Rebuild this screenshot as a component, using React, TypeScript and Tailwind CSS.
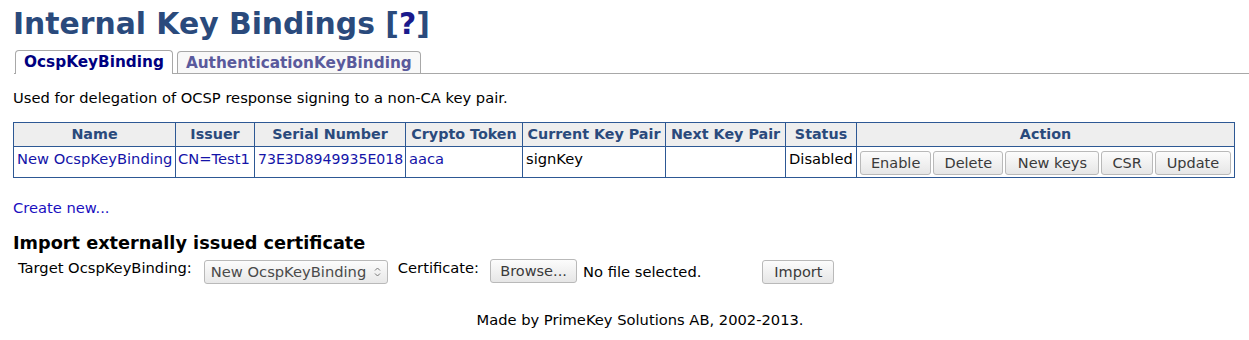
import React from 'react';

const Btn: React.FC<{ label: string; className?: string }> = ({ label, className = '' }) => (
  <button
    className={`h-[24px] px-[8px] rounded-[3px] border border-[#b9b9b9] bg-gradient-to-b from-[#fcfcfc] to-[#e6e6e6] text-[14.5px] text-[#3a3a3a] leading-none whitespace-nowrap ${className}`}
  >
    {label}
  </button>
);

const headers: [string, string][] = [
  ['Name', 'w-[162px]'],
  ['Issuer', 'w-[79px]'],
  ['Serial Number', 'w-[151px]'],
  ['Crypto Token', 'w-[117px]'],
  ['Current Key Pair', 'w-[143px]'],
  ['Next Key Pair', 'w-[120px]'],
  ['Status', 'w-[71px]'],
  ['Action', ''],
];

export default function App() {
  return (
    <div className="min-h-[340px] bg-white text-[14.7px] text-black" style={{ fontFamily: '"DejaVu Sans", Verdana, sans-serif' }}>
      <div className="pl-[13px] pt-[6px]">
        <h1 className="text-[29.8px] font-bold leading-[36px] text-[#2a4a7c]">
          Internal Key Bindings [<a className="text-[#1a1a8c]">?</a>]
        </h1>
      </div>

      {/* tabs */}
      <div className="mt-[8px] ml-[14px] flex items-end gap-[4px] border-b border-[#a8a8a8] pl-[1px] h-[24px]">
        <div className="px-[8px] border border-b-0 border-[#a8a8a8] rounded-t-[4px] bg-white text-[15.3px] font-bold text-[#000080] leading-[23px] relative top-[1px] h-[24px]">
          OcspKeyBinding
        </div>
        <div className="h-[22px] px-[8px] border border-b-0 border-[#a8a8a8] rounded-t-[4px] bg-[#f8f8f8] text-[15.3px] font-bold text-[#5a5a9c] leading-[22px]">
          AuthenticationKeyBinding
        </div>
      </div>

      <div className="px-[13px]">
        <p className="mt-[15px] leading-[18px]">Used for delegation of OCSP response signing to a non-CA key pair.</p>

        <table className="mt-[15px] w-[1222px] table-fixed border-collapse border border-[#2d5894]">
          <thead>
            <tr className="bg-[#eeeeee]">
              {headers.map(([h, w]) => (
                <th key={h} className={`${w} h-[24px] border border-[#2d5894] px-0 text-[14.3px] font-bold text-[#2a4a7c] text-center whitespace-nowrap`}>
                  {h}
                </th>
              ))}
            </tr>
          </thead>
          <tbody>
            <tr className="align-top leading-[18px]">
              <td className="border border-[#2d5894] px-[3px] pt-[3px] text-[#1414a8] whitespace-nowrap">New OcspKeyBinding</td>
              <td className="border border-[#2d5894] px-[2px] pt-[3px] text-[#1414a8] whitespace-nowrap">CN=Test1</td>
              <td className="border border-[#2d5894] px-[3px] pt-[3px] text-[14.1px] text-[#1414a8] whitespace-nowrap">73E3D8949935E018</td>
              <td className="border border-[#2d5894] px-[3px] pt-[3px] text-[#1414a8]">aaca</td>
              <td className="border border-[#2d5894] px-[3px] pt-[3px]">signKey</td>
              <td className="border border-[#2d5894] px-[3px] pt-[3px]"></td>
              <td className="border border-[#2d5894] px-[3px] pt-[3px] whitespace-nowrap">Disabled</td>
              <td className="border border-[#2d5894] px-[3px] pt-[4px] pb-[2px]">
                <div className="flex gap-[2px]">
                  <Btn label="Enable" className="w-[72px]" />
                  <Btn label="Delete" className="w-[71px]" />
                  <Btn label="New keys" className="w-[95px]" />
                  <Btn label="CSR" className="w-[52px]" />
                  <Btn label="Update" className="w-[77px]" />
                </div>
              </td>
            </tr>
          </tbody>
        </table>

        <a className="block mt-[21px] text-[#1a0fbf] leading-[18px]">Create new...</a>

        <h2 className="mt-[16px] text-[17.7px] font-bold leading-[21px]">Import externally issued certificate</h2>

        <div className="mt-[4px] flex items-start pl-[5px]">
          <span className="mt-[1px] leading-[18px]">Target OcspKeyBinding:</span>
          <div className="ml-[12px] mt-[2px] h-[24px] w-[184px] flex items-center justify-between pl-[6px] pr-[6px] rounded-[3px] border border-[#b9b9b9] bg-gradient-to-b from-[#fcfcfc] to-[#e8e8e8] text-[#4a4a4a] whitespace-nowrap">
            <span>New OcspKeyBinding</span>
            <svg width="7" height="12" viewBox="0 0 7 12">
              <path d="M1 4.5 L3.5 2 L6 4.5" fill="none" stroke="#777" strokeWidth="1" />
              <path d="M1 7.5 L3.5 10 L6 7.5" fill="none" stroke="#777" strokeWidth="1" />
            </svg>
          </div>
          <span className="ml-[10px] mt-[1px] leading-[18px]">Certificate:</span>
          <Btn label="Browse..." className="ml-[11px] mt-[1px] w-[87px] h-[23px]" />
          <span className="ml-[6px] mt-[5px] leading-[18px] whitespace-nowrap">No file selected.</span>
          <Btn label="Import" className="ml-[61px] mt-[2px] w-[72px]" />
        </div>

        <p className="mt-[27px] text-center pl-[31px] leading-[18px]">Made by PrimeKey Solutions AB, 2002-2013.</p>
      </div>
    </div>
  );
}
